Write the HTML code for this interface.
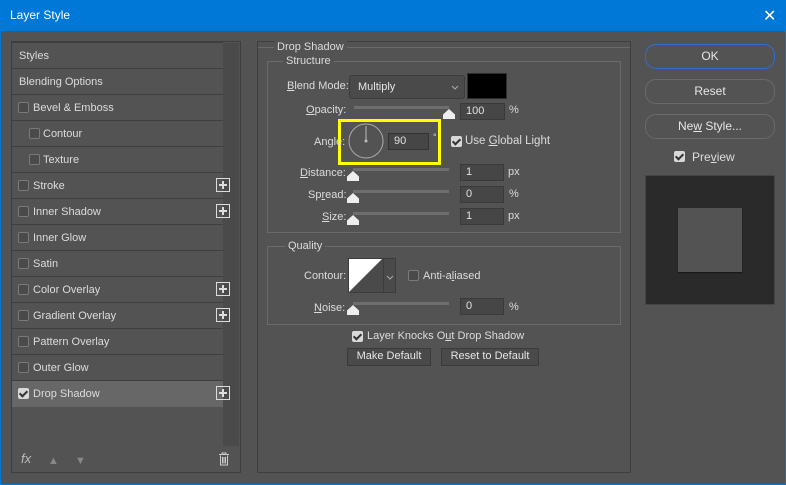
<!DOCTYPE html>
<html><head><meta charset="utf-8"><style>
*{box-sizing:border-box;margin:0;padding:0}
body{width:786px;height:485px;background:#0078d7;font-family:"Liberation Sans",sans-serif;font-size:11px;color:#dcdcdc;position:relative;overflow:hidden}
.a{position:absolute}
#win{left:1px;top:31px;width:784px;height:453px;background:#535353}
.t{position:absolute;white-space:nowrap;line-height:13px}
.row{position:absolute;left:12px;width:211px;height:26px;border-bottom:1px solid #3e3e3e}
.row span{position:absolute;top:7px}
.cb{position:absolute;width:11px;height:11px;border:1px solid #7a7a7a;border-radius:2px;background:#4a4a4a}
.cbc{position:absolute;width:11px;height:11px;border-radius:2px;background:#d8d8d8}
.cbc:after{content:"";position:absolute;left:3px;top:1px;width:3px;height:6px;border:solid #333;border-width:0 2px 2px 0;transform:rotate(45deg)}
.plus{position:absolute;left:204px;width:14px;height:14px;border:1px solid #dcdcdc}
.plus:before{content:"";position:absolute;left:2px;top:5px;width:8px;height:2px;background:#dcdcdc}
.plus:after{content:"";position:absolute;left:5px;top:2px;width:2px;height:8px;background:#dcdcdc}
.inp{position:absolute;background:#464646;border:1px solid #3a3a3a;height:17px;padding-left:5px;line-height:15px;color:#e0e0e0}
.trk{position:absolute;height:3px;background:#6e6e6e}
.th{position:absolute;width:0;height:0}
.th:before{content:"";position:absolute;left:-6px;top:-4px;width:12px;height:10px;background:#eee;clip-path:polygon(50% 0,100% 55%,100% 100%,0 100%,0 55%)}
.btn{position:absolute;border:1px solid #6a6a6a;border-radius:11px;text-align:center;color:#e6e6e6;font-size:12px}
.sb{position:absolute;background:#4a4a4a;border:1px solid #3a3a3a;text-align:center;line-height:15px;color:#e6e6e6}
.grp{position:absolute;border:1px solid #6a6a6a}
u{text-decoration:underline}
</style></head><body>
<div class="t" style="left:10px;top:9px;font-size:12px;color:#fff">Layer Style</div>
<div class="a" style="left:763px;top:6px;color:#fff;font-size:16px">✕</div>
<div id="win" class="a"></div>

<div class="a" style="left:11px;top:41px;width:230px;height:432px;border:1px solid #3e3e3e"></div>
<div class="a" style="left:223px;top:43px;width:16px;height:403px;background:#4a4a4a"></div>
<div class="a" style="left:12px;top:42px;width:211px;height:1px;background:#3e3e3e"></div>
<div class="row" style="top:43px"><span style="left:7px">Styles</span></div>
<div class="row" style="top:69px"><span style="left:7px">Blending Options</span></div>
<div class="row" style="top:95px"><div class="cb" style="left:6px;top:7px"></div><span style="left:21px">Bevel &amp; Emboss</span></div>
<div class="row" style="top:121px"><div class="cb" style="left:17px;top:7px"></div><span style="left:31px">Contour</span></div>
<div class="row" style="top:147px"><div class="cb" style="left:17px;top:7px"></div><span style="left:31px">Texture</span></div>
<div class="row" style="top:173px"><div class="cb" style="left:6px;top:7px"></div><span style="left:21px">Stroke</span><div class="plus" style="top:5px"></div></div>
<div class="row" style="top:199px"><div class="cb" style="left:6px;top:7px"></div><span style="left:21px">Inner Shadow</span><div class="plus" style="top:5px"></div></div>
<div class="row" style="top:225px"><div class="cb" style="left:6px;top:7px"></div><span style="left:21px">Inner Glow</span></div>
<div class="row" style="top:251px"><div class="cb" style="left:6px;top:7px"></div><span style="left:21px">Satin</span></div>
<div class="row" style="top:277px"><div class="cb" style="left:6px;top:7px"></div><span style="left:21px">Color Overlay</span><div class="plus" style="top:5px"></div></div>
<div class="row" style="top:303px"><div class="cb" style="left:6px;top:7px"></div><span style="left:21px">Gradient Overlay</span><div class="plus" style="top:5px"></div></div>
<div class="row" style="top:329px"><div class="cb" style="left:6px;top:7px"></div><span style="left:21px">Pattern Overlay</span></div>
<div class="row" style="top:355px"><div class="cb" style="left:6px;top:7px"></div><span style="left:21px">Outer Glow</span></div>
<div class="row" style="top:381px;background:#676767;border-bottom:none"><div class="cbc" style="left:6px;top:7px"></div><span style="left:21px">Drop Shadow</span><div class="plus" style="top:5px"></div></div>
<div class="t" style="left:21px;top:452px;font-style:italic;font-size:13px;color:#bbb">fx</div>
<div class="a" style="left:48px;top:455px;color:#888;font-size:11px">▲</div>
<div class="a" style="left:75px;top:455px;color:#888;font-size:11px">▼</div>
<svg class="a" style="left:218px;top:452px" width="12" height="14"><path d="M1 2.5h10M4 2.5V1h4v1.5M2.5 3.5v9.5h7V3.5M4.5 5v6.5M6 5v6.5M7.5 5v6.5" stroke="#ccc" fill="none"/></svg>

<div class="a" style="left:257px;top:41px;width:374px;height:432px;border:1px solid #3e3e3e"></div>
<div class="a" style="left:258px;top:47px;width:372px;height:1px;background:#6a6a6a"></div>
<div class="t" style="left:274px;top:41px;background:#535353;padding:0 3px">Drop Shadow</div>
<div class="grp" style="left:267px;top:61px;width:354px;height:172px"></div>
<div class="t" style="left:283px;top:55px;background:#535353;padding:0 3px">Structure</div>

<div class="t" style="left:287px;top:80px"><u>B</u>lend Mode:</div>
<div class="a" style="left:349px;top:75px;width:116px;height:24px;background:#4a4a4a;border:1px solid #3c3c3c;border-radius:3px"><span class="t" style="left:8px;top:5px;color:#e6e6e6">Multiply</span><svg class="a" style="left:101px;top:9px" width="8" height="6"><path d="M1 1l3 3 3-3" stroke="#aaa" fill="none"/></svg></div>
<div class="a" style="left:467px;top:73px;width:40px;height:26px;background:#000;border:1px solid #2e2e2e"></div>

<div class="t" style="left:306px;top:104px"><u>O</u>pacity:</div>
<div class="trk" style="left:354px;top:106px;width:95px"></div>
<div class="th" style="left:449px;top:113px"></div>
<div class="inp" style="left:460px;top:103px;width:45px">100</div>
<div class="t" style="left:509px;top:104px">%</div>

<div class="a" style="left:338px;top:119px;width:103px;height:46px;border:3px solid #ffff00"></div>
<div class="t" style="left:314px;top:136px">Angle:</div>
<svg class="a" style="left:347px;top:122px" width="38" height="38"><circle cx="19" cy="19" r="17" fill="none" stroke="#aaa" stroke-width="1"/><line x1="19" y1="19" x2="19" y2="4" stroke="#bbb"/><circle cx="19" cy="19" r="1.5" fill="#bbb"/></svg>
<div class="inp" style="left:388px;top:133px;width:41px;border-color:#333">90</div>
<div class="t" style="left:433px;top:131px;font-size:9px">°</div>
<div class="cbc" style="left:451px;top:136px"></div>
<div class="t" style="left:465px;top:135px;font-size:11.5px">Use <u>G</u>lobal Light</div>

<div class="t" style="left:300px;top:167px"><u>D</u>istance:</div>
<div class="trk" style="left:353px;top:168px;width:96px"></div>
<div class="th" style="left:353px;top:175px"></div>
<div class="inp" style="left:460px;top:164px;width:44px">1</div>
<div class="t" style="left:508px;top:166px">px</div>

<div class="t" style="left:308px;top:189px">Sp<u>r</u>ead:</div>
<div class="trk" style="left:353px;top:190px;width:96px"></div>
<div class="th" style="left:353px;top:197px"></div>
<div class="inp" style="left:460px;top:186px;width:44px">0</div>
<div class="t" style="left:509px;top:188px">%</div>

<div class="t" style="left:322px;top:211px"><u>S</u>ize:</div>
<div class="trk" style="left:353px;top:212px;width:96px"></div>
<div class="th" style="left:353px;top:219px"></div>
<div class="inp" style="left:460px;top:208px;width:44px">1</div>
<div class="t" style="left:508px;top:210px">px</div>

<div class="grp" style="left:267px;top:246px;width:354px;height:79px"></div>
<div class="t" style="left:285px;top:240px;background:#535353;padding:0 3px">Quality</div>
<div class="t" style="left:304px;top:270px">Contour:</div>
<svg class="a" style="left:348px;top:258px" width="48" height="35"><rect x="0.5" y="0.5" width="47" height="34" fill="#4a4a4a" stroke="#3c3c3c"/><polygon points="1,34 1,1 34,1" fill="#fff"/><line x1="35.5" y1="0" x2="35.5" y2="35" stroke="#3c3c3c"/><path d="M39 18l3 3 3-3" stroke="#aaa" fill="none"/></svg>
<div class="cb" style="left:408px;top:270px"></div>
<div class="t" style="left:423px;top:270px">Anti-a<u>l</u>iased</div>
<div class="t" style="left:314px;top:302px"><u>N</u>oise:</div>
<div class="trk" style="left:353px;top:302px;width:96px"></div>
<div class="th" style="left:353px;top:309px"></div>
<div class="inp" style="left:460px;top:298px;width:44px">0</div>
<div class="t" style="left:509px;top:301px">%</div>

<div class="cbc" style="left:352px;top:331px"></div>
<div class="t" style="left:367px;top:330px">Layer Knocks O<u>u</u>t Drop Shadow</div>
<div class="sb" style="left:347px;top:348px;width:84px;height:18px">Make Default</div>
<div class="sb" style="left:441px;top:348px;width:98px;height:18px">Reset to Default</div>

<div class="btn" style="left:645px;top:44px;width:130px;height:25px;line-height:23px;border-color:#2f6fcf;border-width:1.5px">OK</div>
<div class="btn" style="left:645px;top:79px;width:130px;height:25px;line-height:23px">Reset</div>
<div class="btn" style="left:645px;top:114px;width:130px;height:25px;line-height:23px">Ne<u>w</u> Style...</div>
<div class="cbc" style="left:674px;top:151px"></div>
<div class="t" style="left:692px;top:151px;font-size:12px">Pre<u>v</u>iew</div>
<div class="a" style="left:645px;top:175px;width:130px;height:130px;background:#2a2a2a;border:1px solid #444"></div>
<div class="a" style="left:678px;top:208px;width:64px;height:64px;background:#535353;box-shadow:0 1px 1px #161616"></div>
</body></html>
